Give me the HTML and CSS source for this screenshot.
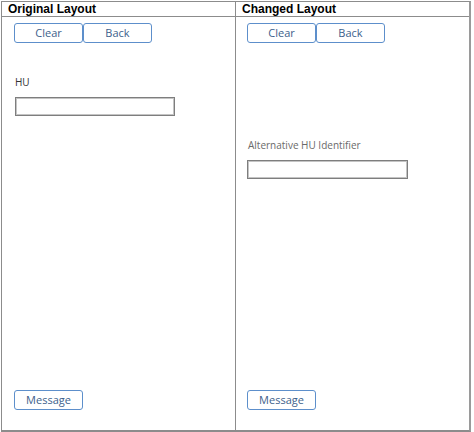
FILE: index.html
```html
<!DOCTYPE html>
<html>
<head>
<meta charset="utf-8">
<link rel="stylesheet" href="styles.css">
</head>
<body>
<div class="frame">
  <div class="head">
    <div class="hcell">Original Layout</div>
    <div class="hcell right">Changed Layout</div>
  </div>
  <div class="bodyrow">
    <div class="panel left">
      <div class="btns"><button class="btn">Clear</button><button class="btn">Back</button></div>
      <div class="field f1">
        <div class="label dark">HU</div>
        <div class="input"></div>
      </div>
      <button class="btn msg">Message</button>
    </div>
    <div class="panel right">
      <div class="btns"><button class="btn">Clear</button><button class="btn">Back</button></div>
      <div class="field f2">
        <div class="label light">Alternative HU Identifier</div>
        <div class="input"></div>
      </div>
      <button class="btn msg">Message</button>
    </div>
  </div>
</div>
</body>
</html>
```
FILE: styles.css
```css
* { box-sizing: border-box; }
html, body { margin: 0; padding: 0; background: #fff; }
body { width: 474px; height: 432px; overflow: hidden; }
.frame {
  margin: 1px 0 0 1px;
  width: 470px;
  height: 431px;
  border: 1px solid #8c8c8c;
  border-bottom: 2px solid #8c8c8c;
  border-right: 2px solid #9a9a9a;
  display: flex;
  flex-direction: column;
}
.head {
  display: flex;
  height: 15px;
  border-bottom: 1px solid #8c8c8c;
}
.hcell {
  width: 233px;
  padding-left: 6px;
  font-family: "Liberation Sans", Arial, sans-serif;
  font-weight: bold;
  font-size: 12px;
  line-height: 14px;
  color: #000;
}
.hcell.right { border-left: 1px solid #8c8c8c; width: 234px; padding-left: 6px; }
.bodyrow { display: flex; flex: 1; }
.panel {
  width: 233px;
  display: flex;
  flex-direction: column;
  padding: 6px 0 20px 12px;
}
.panel.right { width: 234px; border-left: 1px solid #8c8c8c; padding-left: 11px; }
.btns { display: flex; }
.btn {
  width: 69px;
  height: 20px;
  margin: 0;
  padding: 0;
  background: #fff;
  border: 1px solid #5d8fcb;
  border-radius: 3px;
  font-family: "Open Sans", "Noto Sans", sans-serif;
  font-size: 11px;
  color: #3d5f8c;
  line-height: 18px;
}
.field { display: flex; flex-direction: column; }
.f1 { margin-top: 32px; }
.f2 { margin-top: 95px; }
.label {
  font-family: "Open Sans", "Noto Sans", sans-serif;
  font-size: 10px;
  line-height: 14px;
  margin-left: 1px;
}
.label.dark { color: #333; }
.label.light { color: #6a6a6a; }
.input {
  margin-top: 8px;
  margin-left: 1px;
  width: 160px;
  height: 19px;
  border: 1px solid #7e7e7e;
  box-shadow: inset 0 0 0 1px #c4c4c4;
  background: #fff;
}
.f2 .input { margin-left: 0; width: 161px; }
.msg { margin-top: auto; }
```
